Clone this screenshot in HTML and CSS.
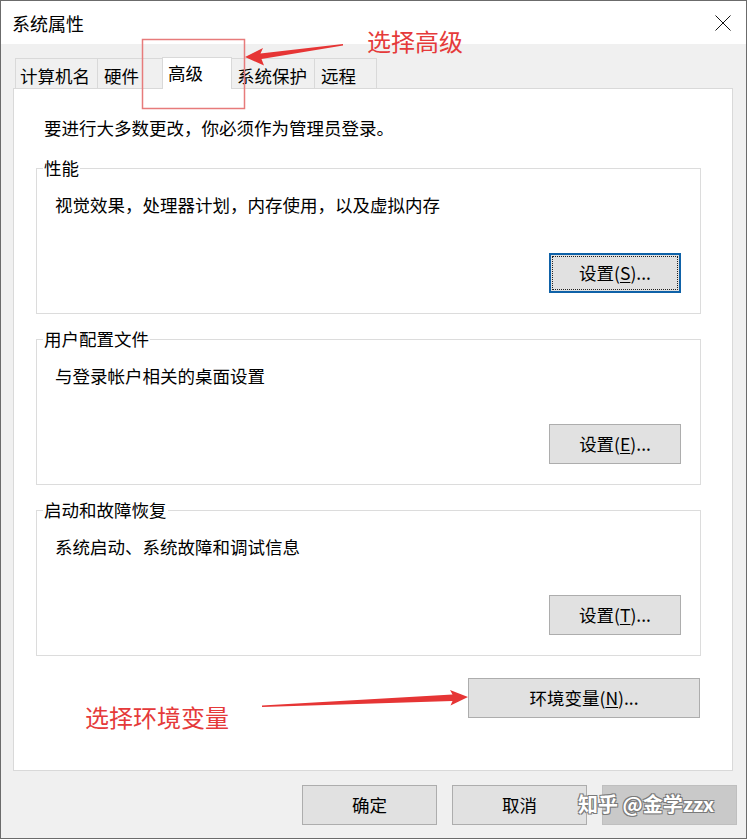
FILE: index.html
```html
<!DOCTYPE html>
<html>
<head>
    <title>系统属性</title>
    <link rel="stylesheet" href="styles.css">
</head>
<body>
    <div class="screen">
        <div class="window">
            <div class="titlebar">
                <span class="title">系统属性</span>
                <svg class="close" width="16" height="16" viewBox="0 0 16 16">
                    <path d="M0.5 0.5L15.5 15.5M15.5 0.5L0.5 15.5" stroke="#111" stroke-width="1" fill="none"/>
                </svg>
            </div>
            <div class="main">
                <div class="tabs">
                    <div class="tab tab-name">计算机名</div>
                    <div class="tab tab-hw">硬件</div>
                    <div class="tab tab-adv active">高级</div>
                    <div class="tab tab-prot">系统保护</div>
                    <div class="tab tab-remote">远程</div>
                </div>
                <div class="panel">
                    <p class="intro">要进行大多数更改，你必须作为管理员登录。</p>

                    <fieldset class="group">
                        <legend>性能</legend>
                        <p>视觉效果，处理器计划，内存使用，以及虚拟内存</p>
                        <div class="group-actions">
                            <button class="btn focused">设置(<u>S</u>)...</button>
                        </div>
                    </fieldset>

                    <fieldset class="group">
                        <legend>用户配置文件</legend>
                        <p>与登录帐户相关的桌面设置</p>
                        <div class="group-actions">
                            <button class="btn">设置(<u>E</u>)...</button>
                        </div>
                    </fieldset>

                    <fieldset class="group">
                        <legend>启动和故障恢复</legend>
                        <p>系统启动、系统故障和调试信息</p>
                        <div class="group-actions">
                            <button class="btn">设置(<u>T</u>)...</button>
                        </div>
                    </fieldset>

                    <div class="env-row">
                        <button class="btn btn-env">环境变量(<u>N</u>)...</button>
                    </div>
                </div>
                <div class="footer">
                    <button class="btn btn-footer">确定</button>
                    <button class="btn btn-footer">取消</button>
                    <!-- 应用 button: its label is covered by the watermark -->
                    <button class="btn btn-footer" disabled></button>
                </div>
            </div>
        </div>

        <!-- annotations drawn over the screenshot -->
        <svg class="marks" width="747" height="839" viewBox="0 0 747 839">
            <rect x="142.5" y="39.5" width="102" height="69" fill="none" stroke="#e77b7b" stroke-width="1.5"/>
            <polygon points="245,57 263,48 260.5,53.5 343,44 343,45.5 261.5,59 264,65.5" fill="#e63535"/>
            <polygon points="468,697 450,690 452.5,694.5 262,705.5 262,707 452.5,701 450.5,705.5" fill="#e63535"/>
        </svg>
        <span class="note note-adv">选择高级</span>
        <span class="note note-env">选择环境变量</span>
        <span class="watermark">知乎 @金学zzx</span>
    </div>
</body>
</html>
```

FILE: styles.css
```css
* {
    box-sizing: border-box;
}

body {
    margin: 0;
    font-family: "Noto Sans CJK SC", "Liberation Sans", sans-serif;
    font-size: 17.5px;
    color: #000;
}

.screen {
    position: relative;
    width: 747px;
    height: 839px;
}

.window {
    width: 747px;
    height: 839px;
    border: 1px solid #6b6b6b;
    background-color: #f0f0f0;
    display: flex;
    flex-direction: column;
}

.titlebar {
    height: 43px;
    background-color: #fff;
    display: flex;
    align-items: center;
    justify-content: space-between;
    padding: 0 15px 0 11px;
}

.title {
    font-size: 18px;
    line-height: 24px;
    margin-top: 1px;
}

.main {
    padding: 13px 13px 0 12px;
}

/* tab strip */
.tabs {
    display: flex;
    align-items: flex-end;
    height: 32px;
    margin-left: 2px;
    margin-bottom: -1px;
}

.tab {
    height: 30px;
    margin-bottom: 1px;
    padding: 4px 0 0 5px;
    line-height: 25px;
    background-color: #f0f0f0;
    border: 1px solid #d9d9d9;
    border-bottom: none;
    border-right: none;
    white-space: nowrap;
}

.tab-name {
    width: 82px;
    padding-left: 4px;
}

.tab-hw {
    width: 67px;
    padding-left: 6px;
}

.tab-prot {
    width: 84px;
    padding-left: 6px;
}

.tab-remote {
    width: 63px;
    padding-left: 6px;
    border-right: 1px solid #d9d9d9;
}

.tab.active {
    position: relative;
    z-index: 1;
    width: 70px;
    height: 32px;
    margin: 0 -2px;
    padding: 3px 0 0 5px;
    line-height: 24px;
    background-color: #fff;
    border-right: 1px solid #d9d9d9;
}

/* tab page */
.panel {
    height: 683px;
    background-color: #fff;
    border: 1px solid #d9d9d9;
    padding: 27px 31px 0 22px;
}

.intro {
    margin: 0 0 18px 8px;
    line-height: 24px;
}

.group {
    margin: 0 0 15px 0;
    padding: 15px 19px 20px 18px;
    border: 1px solid #dcdcdc;
    min-width: 0;
}

.group legend {
    padding: 0 1px;
    margin-left: -12px;
    line-height: 20px;
}

.group p {
    margin: 0;
    line-height: 24px;
}

.group-actions {
    display: flex;
    justify-content: flex-end;
    margin-top: 36px;
}

.env-row {
    display: flex;
    justify-content: flex-end;
    margin: 22px 1px 0 0;
}

/* buttons */
.btn {
    width: 132px;
    height: 40px;
    padding: 0;
    font-family: inherit;
    font-size: 17.5px;
    line-height: 24px;
    color: #000;
    background-color: #e1e1e1;
    border: 1px solid #adadad;
}

.btn u {
    text-underline-offset: 2px;
}

.btn.focused {
    border: 2px solid #0f62a8;
    outline: 1px dotted #222;
    outline-offset: -4px;
}

.btn-env {
    width: 232px;
}

.footer {
    display: flex;
    justify-content: flex-end;
    gap: 15px;
    padding-top: 14px;
    margin-right: -4px;
}

.btn-footer {
    width: 135px;
}

.btn:disabled {
    background-color: #c9c9c9;
    border-color: #bfbfbf;
    color: #838383;
}

/* annotations */
.marks {
    position: absolute;
    top: 0;
    left: 0;
}

.note {
    position: absolute;
    font-size: 24px;
    line-height: 24px;
    color: #e53a3a;
    white-space: nowrap;
}

.note-adv {
    left: 367px;
    top: 29px;
}

.note-env {
    left: 85px;
    top: 705px;
}

.watermark {
    position: absolute;
    left: 578px;
    top: 791px;
    font-size: 20px;
    line-height: 26px;
    font-weight: bold;
    color: #fff;
    white-space: nowrap;
    text-shadow: 1px 1px 0 #7a7a7a, -1px -1px 0 #7a7a7a, 1px -1px 0 #7a7a7a, -1px 1px 0 #7a7a7a;
}
```
